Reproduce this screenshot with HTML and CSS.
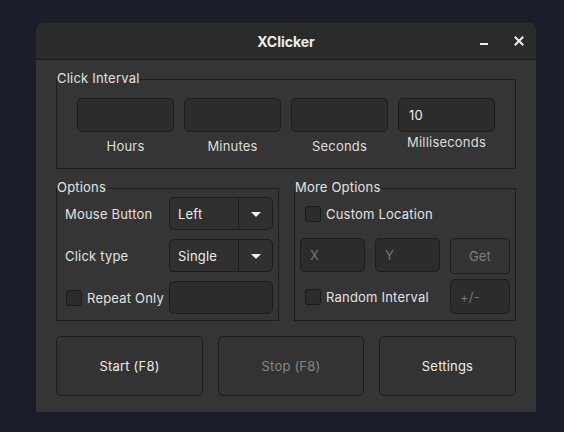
FILE: index.html
```html
<!DOCTYPE html>
<html>
<head>
<meta charset="utf-8">
<link rel="stylesheet" href="styles.css">
</head>
<body>
<div class="window">
  <div class="titlebar">
    <div></div>
    <div class="title">XClicker</div>
    <div class="controls">
      <svg class="ctl min" width="10" height="10" viewBox="0 0 10 10"><rect x="1" y="7" width="8" height="2" fill="#f0f0f0"/></svg>
      <svg class="ctl close" width="10" height="10" viewBox="0 0 10 10"><path d="M1.5 1.5 L8.5 8.5 M8.5 1.5 L1.5 8.5" stroke="#f0f0f0" stroke-width="2" stroke-linecap="square"/></svg>
    </div>
  </div>
  <div class="content">
    <fieldset class="frame interval">
      <legend>Click Interval</legend>
      <div class="interval-row">
        <div class="field"><div class="entry"></div><div class="cap">Hours</div></div>
        <div class="field"><div class="entry"></div><div class="cap">Minutes</div></div>
        <div class="field"><div class="entry"></div><div class="cap">Seconds</div></div>
        <div class="field"><div class="entry value">10</div><div class="cap ms">Milliseconds</div></div>
      </div>
    </fieldset>
    <div class="frames">
      <fieldset class="frame options">
        <legend>Options</legend>
        <div class="opt-body">
          <div class="opt-row">
            <span class="lbl">Mouse Button</span>
            <div class="combo"><span class="combo-text">Left</span><span class="combo-btn"><span class="arrow"></span></span></div>
          </div>
          <div class="opt-row">
            <span class="lbl">Click type</span>
            <div class="combo"><span class="combo-text">Single</span><span class="combo-btn"><span class="arrow"></span></span></div>
          </div>
          <div class="opt-row">
            <span class="check-lbl"><span class="check"></span>Repeat Only</span>
            <div class="entry small"></div>
          </div>
        </div>
      </fieldset>
      <fieldset class="frame more">
        <legend>More Options</legend>
        <div class="more-body">
          <div class="more-row1"><span class="check-lbl"><span class="check"></span>Custom Location</span></div>
          <div class="more-row2">
            <div class="entry xy ph">X</div>
            <div class="entry xy ph">Y</div>
            <div class="btn get">Get</div>
          </div>
          <div class="more-row3">
            <span class="check-lbl"><span class="check"></span>Random Interval</span>
            <div class="entry pm ph">+/-</div>
          </div>
        </div>
      </fieldset>
    </div>
    <div class="actions">
      <div class="btn big start">Start (F8)</div>
      <div class="btn big stop">Stop (F8)</div>
      <div class="btn big settings">Settings</div>
    </div>
  </div>
</div>
</body>
</html>
```
FILE: styles.css
```css
* { box-sizing: border-box; }
html, body { margin: 0; padding: 0; }
body {
  background: #1b1e28;
  width: 564px;
  height: 432px;
  overflow: hidden;
  font-family: Inter, "Noto Sans", "DejaVu Sans", sans-serif;
  font-size: 13px;
  letter-spacing: 0.2px;
  color: #e6e6e6;
}
.window {
  margin: 23px 0 0 36px;
  width: 500px;
  height: 389px;
  background: #353535;
  border-radius: 8px 8px 0 0;
  display: flex;
  flex-direction: column;
  overflow: hidden;
}
.titlebar {
  height: 37px;
  flex: none;
  background: #2b2b2b;
  border-bottom: 1px solid #1a1a1a;
  display: grid;
  grid-template-columns: 1fr auto 1fr;
  align-items: center;
}
.title {
  font-weight: 700;
  font-size: 14px;
  letter-spacing: 0;
  color: #ececec;
}
.controls {
  justify-self: end;
  align-self: stretch;
  display: flex;
  align-items: flex-start;
  gap: 25px;
  padding-right: 12px;
}
.ctl { display: block; margin-top: 13px; }
.content {
  flex: 1;
  padding: 11px 20px 16px 20px;
  display: flex;
  flex-direction: column;
}
fieldset.frame {
  margin: 0;
  padding: 0;
  border: 1px solid #1e1e1e;
  min-width: 0;
}
fieldset.frame legend {
  padding: 0 0 3px 0;
  line-height: 14px;
  font-size: 13px;
  color: #e2e2e2;
}
.interval-row {
  display: flex;
  gap: 10px;
  padding: 10px 0 14px 20px;
  align-items: flex-start;
}
.field {
  width: 97px;
  display: flex;
  flex-direction: column;
  align-items: center;
}
.entry {
  background: #2c2c2c;
  border: 1px solid #1d1d1d;
  border-radius: 5px;
}
.field .entry {
  width: 97px;
  height: 34px;
}
.entry.value {
  display: flex;
  align-items: center;
  padding-left: 10px;
  color: #ececec;
}
.cap {
  margin-top: 6px;
  line-height: 16px;
  color: #dedede;
}
.cap.ms { margin-top: 2px; }
.frames {
  margin-top: 11px;
  display: flex;
  gap: 15px;
}
.frame.options { width: 223px; flex: none; }
.frame.more { flex: 1; }
.opt-body {
  padding: 0 5px 6px 8px;
  display: flex;
  flex-direction: column;
  gap: 9px;
}
.opt-row {
  display: flex;
  align-items: center;
  justify-content: space-between;
  height: 33px;
}
.lbl { color: #e2e2e2; }
.combo {
  width: 104px;
  height: 33px;
  border: 1px solid #1d1d1d;
  border-radius: 5px;
  background: #303030;
  display: flex;
}
.combo-text {
  flex: 1;
  display: flex;
  align-items: center;
  padding-left: 8px;
  color: #ececec;
}
.combo-btn {
  width: 34px;
  border-left: 1px solid #1d1d1d;
  display: flex;
  align-items: center;
  justify-content: center;
}
.arrow {
  width: 0;
  height: 0;
  border-left: 5px solid transparent;
  border-right: 5px solid transparent;
  border-top: 5px solid #f0f0f0;
  margin-top: 1px;
}
.entry.small { width: 104px; height: 33px; }
.check-lbl {
  display: flex;
  align-items: center;
  color: #e2e2e2;
}
.check {
  width: 16px;
  height: 16px;
  border: 1px solid #1a1a1a;
  border-radius: 3px;
  background: #2c2c2c;
  margin-right: 5px;
  margin-left: 1px;
}
.more-body {
  padding: 0 5px 6px 5px;
  display: flex;
  flex-direction: column;
}
.more-row1 {
  height: 33px;
  display: flex;
  align-items: center;
  padding-left: 4px;
}
.more-row2 {
  margin-top: 8px;
  display: grid;
  grid-template-columns: 65px 65px 60px;
  gap: 10px;
  align-items: start;
}
.entry.xy { height: 34px; }
.ph {
  display: flex;
  align-items: center;
  padding-left: 9px;
  color: #767676;
}
.btn {
  background: #333333;
  border: 1px solid #1c1c1c;
  border-radius: 5px;
  display: flex;
  align-items: center;
  justify-content: center;
  color: #ececec;
}
.btn.get { height: 36px; color: #7e7e7e; }
.more-row3 {
  margin-top: 5px;
  display: flex;
  align-items: center;
  justify-content: space-between;
  padding-left: 4px;
}
.entry.pm { width: 60px; height: 35px; }
.actions {
  margin-top: 15px;
  display: flex;
  gap: 15px;
}
.btn.big { height: 60px; }
.btn.start { width: 147px; }
.btn.stop { width: 146px; color: #858585; }
.btn.settings { flex: 1; }
```
